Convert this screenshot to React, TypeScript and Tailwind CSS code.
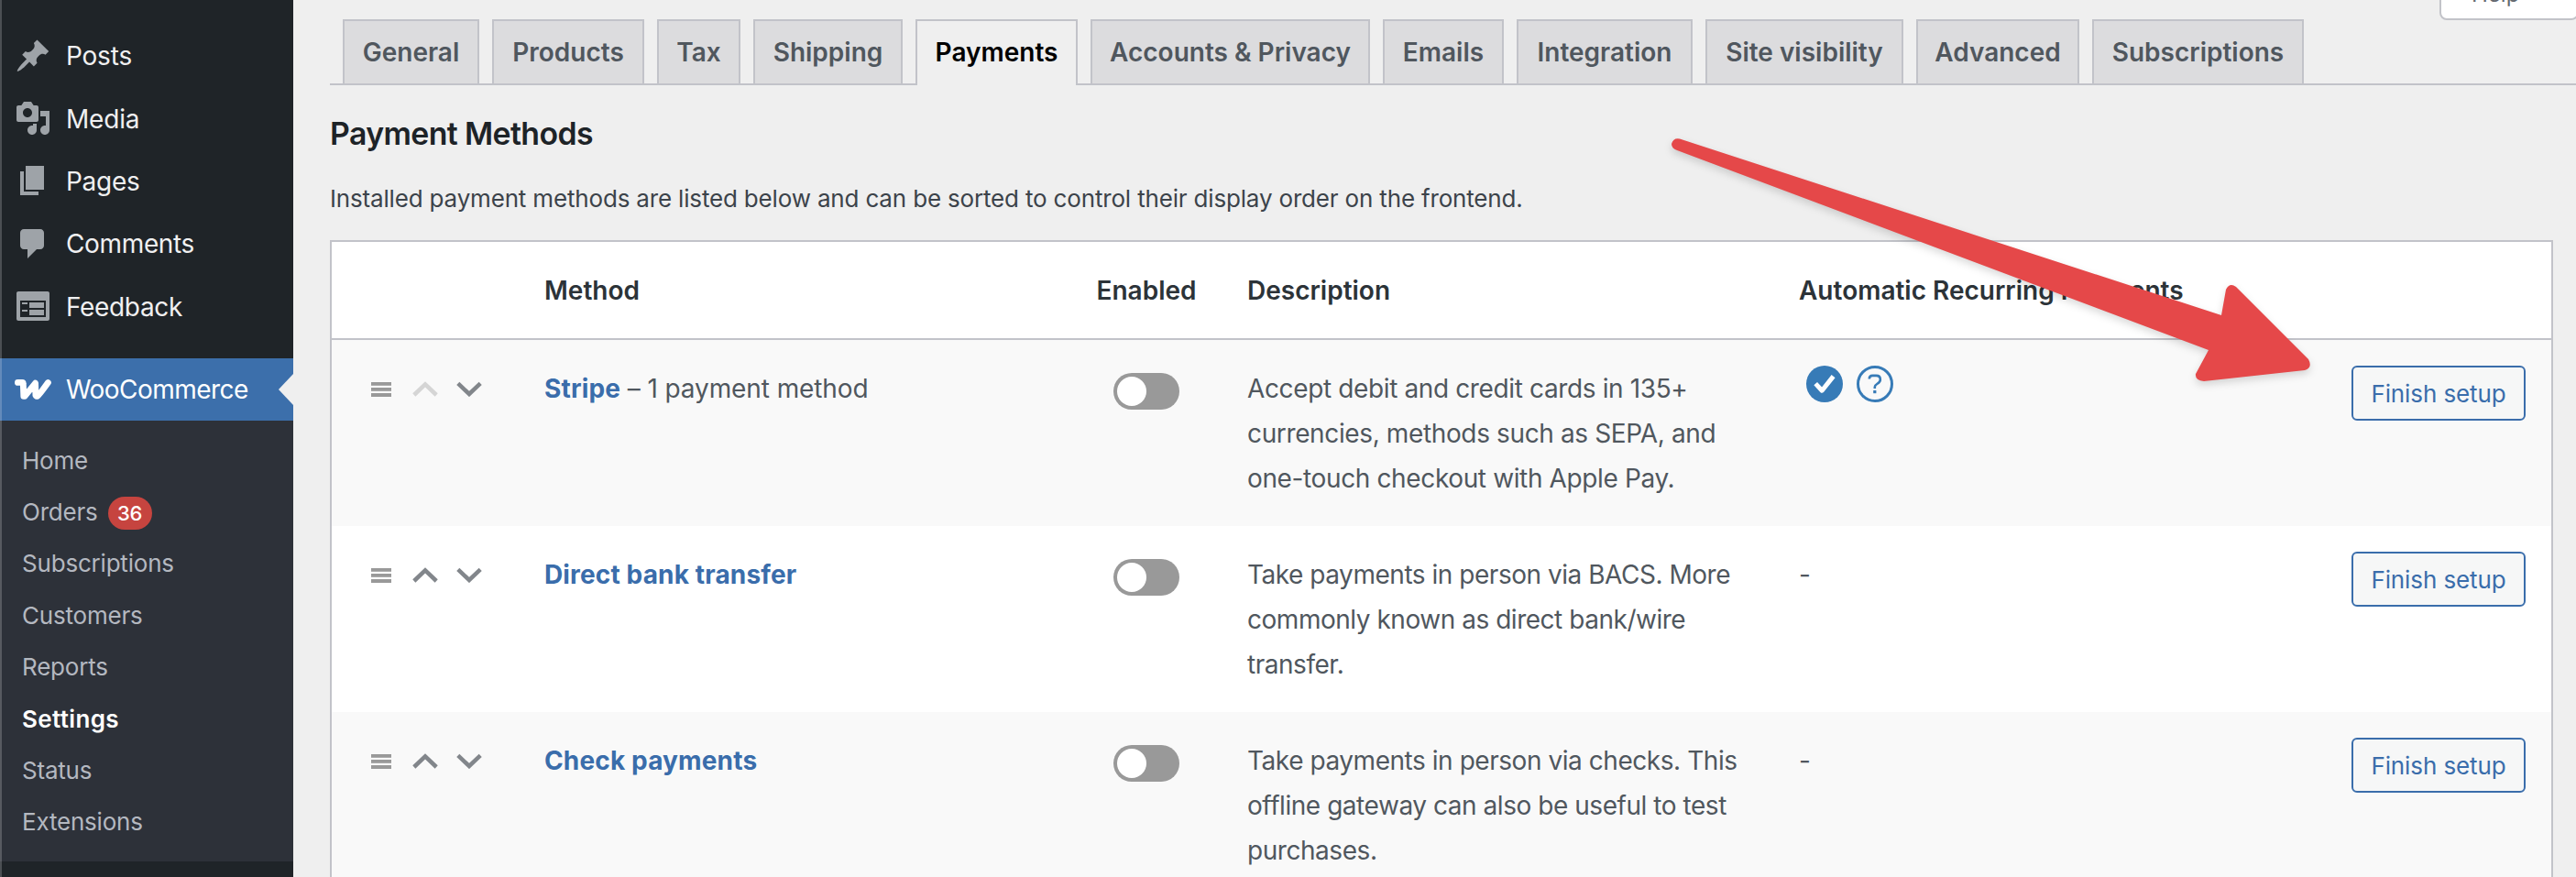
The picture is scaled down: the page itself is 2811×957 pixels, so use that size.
import clsx from 'clsx';

const menu = [
  {
    label: 'Posts',
    tracking: 'tracking-[-0.2px]',
    d: 'M10.44 3.02l1.82-1.82 6.36 6.35-1.83 1.82c-1.05-.68-2.48-.57-3.41.36l-.75.75c-.92.93-1.04 2.35-.35 3.41l-1.83 1.82-2.41-2.41-2.8 2.79c-.42.42-3.38 2.71-3.8 2.29s1.86-3.39 2.28-3.81l2.79-2.79L4.1 9.36l1.83-1.82c1.05.69 2.48.57 3.4-.36l.75-.75c.93-.92 1.05-2.35.36-3.41z',
  },
  {
    label: 'Media',
    tracking: 'tracking-[-0.2px]',
    d: 'M13 11V4c0-.55-.45-1-1-1h-1.67L9 1H5L3.67 3H2c-.55 0-1 .45-1 1v7c0 .55.45 1 1 1h10c.55 0 1-.45 1-1zM7 4.5c1.38 0 2.5 1.12 2.5 2.5S8.38 9.5 7 9.5 4.5 8.38 4.5 7 5.62 4.5 7 4.5zM14 6h5v10.5c0 1.38-1.12 2.5-2.5 2.5S14 17.88 14 16.5s1.12-2.5 2.5-2.5c.17 0 .34.02.5.05V9h-3V6zm-4 8.05V13h2v3.5c0 1.38-1.12 2.5-2.5 2.5S7 17.88 7 16.5 8.12 14 9.5 14c.17 0 .34.02.5.05z',
  },
  {
    label: 'Pages',
    tracking: 'tracking-[-0.3px]',
    d: 'M6 15V2h10v13H6zm-1 1h8v2H3V5h2v11z',
  },
  {
    label: 'Comments',
    tracking: 'tracking-[-0.35px]',
    d: 'M5 2h9c1.1 0 2 .9 2 2v7c0 1.1-.9 2-2 2h-2l-5 5v-5H5c-1.1 0-2-.9-2-2V4c0-1.1.9-2 2-2z',
  },
  {
    label: 'Feedback',
    tracking: 'tracking-[-0.35px]',
    d: 'M2 2h16c.55 0 1 .45 1 1v14c0 .55-.45 1-1 1H2c-.55 0-1-.45-1-1V3c0-.55.45-1 1-1zm15 14V7H3v9h14zM4 8v1h3V8H4zm4 0v3h8V8H8zm-4 4v1h3v-1H4zm4 0v3h8v-3H8z',
  },
];

const submenu = ['Home', 'Orders', 'Subscriptions', 'Customers', 'Reports', 'Settings', 'Status', 'Extensions'];

const tabs = [
  { label: 'General', width: 'w-[149px]' },
  { label: 'Products', width: 'w-[166px]' },
  { label: 'Tax', width: 'w-[91px]' },
  { label: 'Shipping', width: 'w-[163px]' },
  { label: 'Payments', width: 'w-[177px]' },
  { label: 'Accounts & Privacy', width: 'w-[305px]' },
  { label: 'Emails', width: 'w-[132px]' },
  { label: 'Integration', width: 'w-[192px]' },
  { label: 'Site visibility', width: 'w-[216px]' },
  { label: 'Advanced', width: 'w-[178px]' },
  { label: 'Subscriptions', width: 'w-[231px]' },
];

const gateways = [
  {
    name: 'Stripe',
    note: ' – 1 payment method',
    lines: ['Accept debit and credit cards in 135+', 'currencies, methods such as SEPA, and', 'one-touch checkout with Apple Pay.'],
    tracking: 'tracking-[-0.37px]',
    recurring: true,
  },
  {
    name: 'Direct bank transfer',
    lines: ['Take payments in person via BACS. More', 'commonly known as direct bank/wire', 'transfer.'],
    tracking: 'tracking-[-0.47px]',
    recurring: false,
  },
  {
    name: 'Check payments',
    lines: ['Take payments in person via checks. This', 'offline gateway can also be useful to test', 'purchases.'],
    tracking: 'tracking-[-0.45px]',
    recurring: false,
  },
];

const columns = 'grid grid-cols-[232px_557px_200px_612px_470px_1fr]';

function Sidebar() {
  return (
    <aside className="relative w-80 shrink-0 bg-[#1f2428]">
      <ul className="pt-[26.5px]">
        {menu.map((item) => (
          <li key={item.label} className="flex h-[68.4px] items-center">
            <svg viewBox="0 0 20 20" className="ml-4 h-10 w-10 fill-[#9ea3a8]">
              <path d={item.d} />
            </svg>
            <span className={clsx('ml-4 pt-px text-[28px] leading-9 text-[#f0f0f1]', item.tracking)}>{item.label}</span>
          </li>
        ))}
      </ul>

      {/* Current section */}
      <div className="relative mt-[22.5px] flex h-[68px] items-center bg-[#3c6fab]">
        <svg viewBox="0 0 40 22" className="ml-4 h-[22px] w-10" fill="none" stroke="#fff" strokeWidth="6.8" strokeLinecap="round" strokeLinejoin="round">
          <path d="M3.4 3.4H8.2Q9.3 3.4 9.3 5L9.8 18.4L11 18.4L22.6 4.2L22.9 17.4Q23.4 18.8 25 18.2Q26.4 17.6 36.4 3.6" />
        </svg>
        <span className="ml-4 pt-px text-[28px] leading-9 tracking-[-0.55px] text-white">WooCommerce</span>
        <div className="absolute right-0 top-[17px] h-0 w-0 border-y-[17px] border-r-[16px] border-y-transparent border-r-[#efefef]" />
      </div>

      <ul className="h-[481px] bg-[#2d3139] pt-[15px]">
        {submenu.map((label) => (
          <li
            key={label}
            className={clsx(
              'flex h-[56.4px] items-center pl-6 text-[26px]',
              label === 'Settings' ? 'font-semibold tracking-[0.35px] text-white' : 'tracking-[-0.2px] text-[#b4b8c0]'
            )}
          >
            {label}
            {label === 'Orders' && (
              <span className="ml-[11px] mt-[3px] flex h-9 w-12 items-center justify-center rounded-full bg-[#c6443f] text-[22px] font-medium text-white">
                36
              </span>
            )}
          </li>
        ))}
      </ul>
      <div className="absolute inset-y-0 left-0 w-0.5 bg-white/20" />
    </aside>
  );
}

function SortHandles({ first }: { first: boolean }) {
  return (
    <div className="flex pl-[43px] pt-[45px]">
      <svg viewBox="0 0 22 16" className="mt-px h-4 w-[22px] shrink-0 fill-[#999]">
        <rect y="0" width="22" height="3.8" />
        <rect y="6" width="22" height="3.8" />
        <rect y="12" width="22" height="4" />
      </svg>
      <svg viewBox="0 0 28 17" className={clsx('ml-[23px] h-[17px] w-7 shrink-0', first ? 'stroke-[#d5d5d5]' : 'stroke-[#82868b]')} fill="none" strokeWidth="4.5">
        <path d="M1.8 15L14 3.4L26.2 15" />
      </svg>
      <svg viewBox="0 0 28 17" className="ml-5 h-[17px] w-7 shrink-0 stroke-[#82868b]" fill="none" strokeWidth="4.5">
        <path d="M1.8 2.4L14 14L26.2 2.4" />
      </svg>
    </div>
  );
}

function RecurringStatus() {
  return (
    <div className="flex gap-[15px] pl-2 pt-7">
      <svg viewBox="0 0 40 40" className="h-10 w-10">
        <circle cx="20" cy="20" r="20" fill="#377bb7" />
        <path d="M10.2 19.6L17.2 27.2L29.6 11.6" fill="none" stroke="#fff" strokeWidth="5" strokeLinejoin="round" />
      </svg>
      <svg viewBox="0 0 40 40" className="h-10 w-10" fill="none" stroke="#377bb7">
        <circle cx="20" cy="20" r="18.5" strokeWidth="3" />
        <path d="M13.8 14.6C13.8 12 15 10.9 17.4 10.9H21.4C24.4 10.9 25.8 12.2 25.8 14.8V15.4C25.8 19.8 19.8 19.6 19.8 23.2V25" strokeWidth="2.6" />
        <rect x="18.2" y="27" width="3.2" height="3.2" fill="#377bb7" stroke="none" />
      </svg>
    </div>
  );
}

export default function App() {
  return (
    <div className="relative flex h-[957px] w-full overflow-hidden bg-[#efefef] font-[Inter,sans-serif]">
      <Sidebar />

      <main className="ml-10 flex-1">
        <nav className="mt-[21px] flex h-[72px] gap-[14px] border-b-2 border-[#c2c3c9] pl-[14px]">
          {tabs.map((tab) => (
            <a
              key={tab.label}
              className={clsx(
                'shrink-0 whitespace-nowrap border-2 border-b-0 border-[#c2c3c9] pt-[10px] text-center text-[28px] font-semibold leading-[48px]',
                tab.width,
                tab.label === 'Payments' ? 'h-[72px] bg-[#efefef] text-black' : 'h-[70px] bg-[#dcdcde] text-[#50575e]'
              )}
            >
              {tab.label}
            </a>
          ))}
        </nav>

        <h2 className="mt-[29px] text-[33.8px] font-semibold leading-[48px] tracking-[-0.6px] text-[#1d2327]">Payment Methods</h2>
        <p className="mt-[27px] text-[26px] leading-10 tracking-[-0.17px] text-[#3c434a]">
          Installed payment methods are listed below and can be sorted to control their display order on the frontend.
        </p>

        <section className="mr-[25px] mt-[25px] border-2 border-[#c2c3c9] bg-white text-[28px] leading-[49px] text-[#50575e]">
          <div className={clsx(columns, 'h-[107px] items-center border-b-2 border-[#c2c3c9] pt-[2px] font-semibold text-[#2c3338]')}>
            <span />
            <span>Method</span>
            <span className="text-center">Enabled</span>
            <span className="pl-[10px]">Description</span>
            <span className="whitespace-nowrap">Automatic Recurring Payments</span>
          </div>

          {gateways.map((g, i) => (
            <div key={g.name} className={clsx(columns, 'h-[203px]', i % 2 === 0 ? 'bg-[#f9f9f9]' : 'bg-white')}>
              <SortHandles first={i === 0} />
              <div className="pt-[29px]">
                <a className="font-bold tracking-[0.15px] text-[#3a6dab]">{g.name}</a>
                {g.note && <span className="tracking-[-0.1px]">{g.note}</span>}
              </div>
              <div className="flex justify-center pt-9">
                <span className="flex h-10 w-[72px] rounded-full bg-[#999] p-1">
                  <span className="h-8 w-8 rounded-full bg-white" />
                </span>
              </div>
              <div className={clsx('pl-[10px] pt-[29px]', g.tracking)}>
                {g.lines.map((line) => (
                  <p key={line} className="whitespace-nowrap">
                    {line}
                  </p>
                ))}
              </div>
              {g.recurring ? <RecurringStatus /> : <div className="pt-[29px]">-</div>}
              <div className="flex justify-end pr-7 pt-7">
                <button className="h-[60px] w-[190px] rounded-md border-2 border-[#3a6dab] bg-[#f6f7f7] pt-[2px] text-[26px] leading-none tracking-[-0.1px] text-[#3a6dab]">
                  Finish setup
                </button>
              </div>
            </div>
          ))}
        </section>
      </main>

      {/* Help tab hanging from the top edge */}
      <div className="absolute -right-[3px] -top-7 h-[50px] w-[152px] rounded-b-lg border-2 border-[#c2c3c9] bg-white pl-[33px] pt-1 text-[24px] leading-[32px] text-[#646970]">
        Help
      </div>

      {/* Callout arrow */}
      <svg viewBox="0 0 740 300" className="absolute left-[1800px] top-[140px] h-[300px] w-[740px] drop-shadow-[0_4px_4px_rgba(0,0,0,0.15)]">
        <path
          fill="#e54849"
          d="M33 11.5L624 204L629 176Q633 168 640 173L719 252Q724 261 715 264L605 276Q595 275 596 268L610 242L30 24Q24 22 24 17Q26 10 33 11.5Z"
        />
      </svg>
    </div>
  );
}
